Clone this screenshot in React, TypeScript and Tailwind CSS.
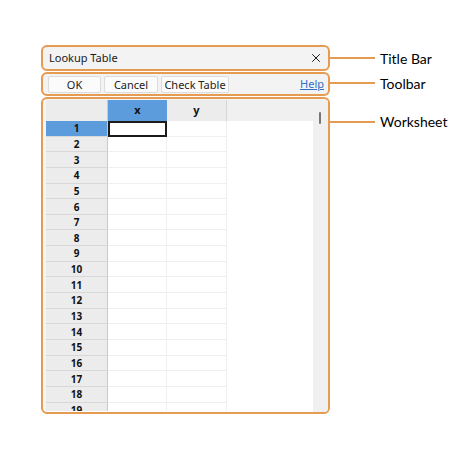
import { X } from 'lucide-react';

/**
 * Lookup Table dialog with callouts naming each part
 */

const ORANGE = 'border-[#e69b52]';
const rows = Array.from({ length: 19 }, (_, i) => i + 1);

function Callout({ label }: { label: string }) {
  return (
    <div className="flex items-center">
      <div className="w-[45px] h-[2px] bg-[#e69b52]" />
      <span className="ml-[5px] text-[14px] text-black font-['Lato',sans-serif]">{label}</span>
    </div>
  );
}

function ToolButton({ label, width }: { label: string; width: string }) {
  return (
    <button
      className={`${width} h-[17px] rounded-[2px] border border-[#dcdcdc] bg-[#fbfbfb] text-[11px] leading-none text-[#222]`}
    >
      {label}
    </button>
  );
}

export default function App() {
  return (
    <div className="w-[474px] h-[452px] bg-white pt-[45px] pl-[41px] font-['Noto_Sans',sans-serif]">
      {/* Title bar */}
      <div className="flex items-center">
        <div className={`w-[289px] h-[26px] rounded-[6px] border-2 ${ORANGE} bg-[#f3f3f3] flex items-center justify-between pl-[6px] pr-[5px]`}>
          <span className="text-[11px] text-[#1a1a1a]">Lookup Table</span>
          <X size={14} strokeWidth={1.7} className="text-[#1a1a1a]" />
        </div>
        <Callout label="Title Bar" />
      </div>

      {/* Toolbar */}
      <div className="flex items-center mt-px">
        <div className={`w-[289px] h-[24px] rounded-[6px] border-2 ${ORANGE} bg-[#f3f3f3] flex items-center pl-[5px] pr-[4px]`}>
          <div className="flex gap-[3px]">
            <ToolButton label="OK" width="w-[53px]" />
            <ToolButton label="Cancel" width="w-[54px]" />
            <ToolButton label="Check Table" width="w-[68px]" />
          </div>
          <span className="ml-auto text-[11px] text-[#2f6fc7] underline">Help</span>
        </div>
        <div className="-mt-[2px]">
          <Callout label="Toolbar" />
        </div>
      </div>

      {/* Worksheet */}
      <div className="flex items-start mt-px">
        <div className={`w-[289px] h-[317px] rounded-[6px] border-2 ${ORANGE} bg-[#f5f5f5] pl-[3px] pt-px flex overflow-hidden`}>
          <div className="w-[267px] flex flex-col bg-white">
            {/* column headers */}
            <div className="flex h-[21px] shrink-0">
              <div className="w-[62px] bg-[#ececec] border-r border-[#c9c9c9]" />
              <div className="w-[59px] bg-[#5c9bdc] flex items-center justify-center text-[11px] font-bold text-[#111]">x</div>
              <div className="w-[60px] bg-[#ececec] border-r border-[#d6d6d6] flex items-center justify-center text-[11px] font-bold text-[#111]">y</div>
              <div className="flex-1 bg-[#f0f0f0]" />
            </div>
            {/* rows; the last one runs past the bottom edge */}
            <div className="h-[290px] overflow-hidden">
              {rows.map((r) => (
                <div key={r} className="flex h-[15.65px]">
                  <div
                    className={`w-[62px] border-r border-[#c9c9c9] border-b border-b-[#d8d8d8] flex items-center justify-center text-[10px] font-bold leading-none text-[#111] ${
                      r === 1 ? 'bg-[#5c9bdc]' : 'bg-[#ececec]'
                    }`}
                  >
                    {r}
                  </div>
                  <div
                    className={`w-[59px] ${
                      r === 1 ? 'border-2 border-[#1b1b1b]' : 'border-b border-r border-[#efefef]'
                    }`}
                  />
                  <div className="w-[60px] border-b border-r border-[#efefef]" />
                  <div className="flex-1" />
                </div>
              ))}
            </div>
          </div>
          {/* vertical scrollbar */}
          <div className="w-[15px] bg-[#f0f0f0] relative">
            <div className="absolute left-[6px] top-[12px] w-[2px] h-[12px] rounded-full bg-[#777]" />
          </div>
        </div>
        <div className="mt-[14px]">
          <Callout label="Worksheet" />
        </div>
      </div>
    </div>
  );
}
